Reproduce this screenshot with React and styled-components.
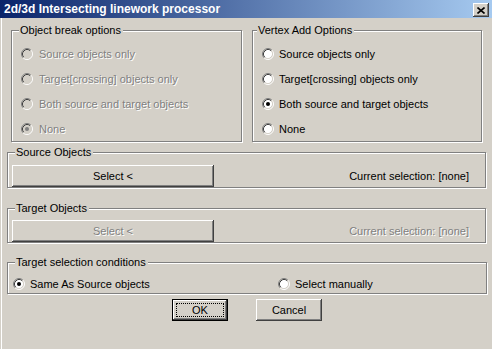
import styled, { createGlobalStyle } from "styled-components";

const GlobalStyle = createGlobalStyle`
  html, body {
    margin: 0;
    padding: 0;
    background: #d4d0c8;
  }
  body {
    font-family: "Liberation Sans", Arial, sans-serif;
    font-size: 11px;
    color: #000;
  }
`;

const Window = styled.div`
  width: 492px;
  height: 349px;
  background: #d4d0c8;
  box-shadow: inset 1px 0 #d4d0c8, inset 2px 0 #fff;
  display: flex;
  flex-direction: column;
  overflow: hidden;
`;

const TitleBar = styled.div`
  height: 18px;
  display: flex;
  align-items: center;
  justify-content: space-between;
  padding: 0 3px 0 4px;
  background: linear-gradient(to right, #0a246a, #a6caf0);
  color: #fff;
  font-weight: bold;
  font-size: 12px;
`;

const CloseButton = styled.div`
  width: 16px;
  height: 14px;
  margin-top: 2px;
  background: #d4d0c8;
  box-shadow: inset -1px -1px #404040, inset 1px 1px #fff,
    inset -2px -2px #808080, inset 2px 2px #d4d0c8;
  display: flex;
  align-items: center;
  justify-content: center;
`;

const TopRow = styled.div`
  display: flex;
  gap: 10px;
  margin: 12px 0 0 11px;
`;

const Group = styled.div`
  position: relative;
  width: ${(p) => p.$width}px;
  height: ${(p) => p.$height}px;
  box-sizing: border-box;
  border: 1px solid #808080;
  box-shadow: inset 1px 1px #fff, 1px 1px #fff;
  padding: ${(p) => p.$pad || "0"};
  margin: ${(p) => p.$margin || "0"};
  display: flex;
  flex-direction: ${(p) => (p.$row ? "row" : "column")};
  align-items: ${(p) => (p.$row ? "center" : "stretch")};
`;

const Legend = styled.span`
  position: absolute;
  top: -8px;
  left: ${(p) => p.$left || 7}px;
  padding: 0 2px 0 1px;
  background: #d4d0c8;
  line-height: 14px;
`;

const RadioRow = styled.label`
  display: flex;
  align-items: center;
  gap: ${(p) => p.$gap || 6}px;
  height: ${(p) => p.$h || 25}px;
  width: ${(p) => (p.$w ? `${p.$w}px` : "auto")};
  flex: none;
  color: ${(p) => (p.$disabled ? "#808080" : "#000")};
  text-shadow: ${(p) => (p.$disabled ? "1px 1px #fff" : "none")};
  white-space: nowrap;
`;

const Button = styled.div`
  width: ${(p) => p.$width}px;
  height: 22px;
  box-sizing: border-box;
  flex: none;
  background: #d4d0c8;
  display: flex;
  align-items: center;
  justify-content: center;
  position: relative;
  color: ${(p) => (p.$disabled ? "#808080" : "#000")};
  text-shadow: ${(p) => (p.$disabled ? "1px 1px #fff" : "none")};
  border: ${(p) => (p.$default ? "1px solid #000" : "none")};
  box-shadow: inset -1px -1px #404040, inset 1px 1px #fff,
    inset -2px -2px #808080, inset 2px 2px #d4d0c8;
`;

const FocusRing = styled.span`
  position: absolute;
  inset: 3px;
  border: 1px dotted #000;
`;

const Selection = styled.span`
  margin-left: auto;
  color: ${(p) => (p.$disabled ? "#808080" : "#000")};
  text-shadow: ${(p) => (p.$disabled ? "1px 1px #fff" : "none")};
`;

const ButtonRow = styled.div`
  display: flex;
  justify-content: center;
  gap: 28px;
  margin: 5px 0 0 2px;
`;

function RadioGlyph({ checked, disabled }) {
  const fill = disabled ? "#d4d0c8" : "#fff";
  const dot = disabled ? "#808080" : "#000";
  return (
    <svg width="12" height="12" viewBox="0 0 12 12" style={{ flex: "none" }}>
      <circle cx="6" cy="6" r="4.5" fill={fill} />
      <path d="M2.11 9.89 A5.5 5.5 0 0 1 9.89 2.11" fill="none" stroke="#808080" />
      <path d="M9.89 2.11 A5.5 5.5 0 0 1 2.11 9.89" fill="none" stroke="#fff" />
      <path d="M2.82 9.18 A4.5 4.5 0 0 1 9.18 2.82" fill="none" stroke="#404040" />
      <path d="M9.18 2.82 A4.5 4.5 0 0 1 2.82 9.18" fill="none" stroke="#d4d0c8" />
      {checked && <circle cx="6" cy="6" r="2" fill={dot} />}
    </svg>
  );
}

function Radio({ label, checked, disabled, ...rest }) {
  return (
    <RadioRow $disabled={disabled} {...rest}>
      <RadioGlyph checked={checked} disabled={disabled} />
      <span>{label}</span>
    </RadioRow>
  );
}

const breakOptions = [
  "Source objects only",
  "Target[crossing] objects only",
  "Both source and target objects",
  "None",
];

export default function App() {
  return (
    <Window>
      <GlobalStyle />
      <TitleBar>
        <span>2d/3d Intersecting linework processor</span>
        <CloseButton>
          <svg width="8" height="7" viewBox="0 0 8 7">
            <path d="M0.5 0.5 L7.5 6.5 M7.5 0.5 L0.5 6.5" stroke="#000" strokeWidth="1.6" />
          </svg>
        </CloseButton>
      </TitleBar>

      <TopRow>
        <Group $width={231} $height={112} $pad="10px 0 0 9px">
          <Legend>Object break options</Legend>
          {breakOptions.map((o) => (
            <Radio key={o} label={o} disabled checked={o === "None"} />
          ))}
        </Group>
        <Group $width={230} $height={112} $pad="10px 0 0 9px">
          <Legend $left={4}>Vertex Add Options</Legend>
          {breakOptions.map((o) => (
            <Radio key={o} label={o} $gap={5} checked={o === "Both source and target objects"} />
          ))}
        </Group>
      </TopRow>

      <Group $row $width={479} $height={36} $pad="12px 16px 0 4px" $margin="10px 0 0 7px">
        <Legend>Source Objects</Legend>
        <Button $width={202}>Select &lt;</Button>
        <Selection>Current selection: [none]</Selection>
      </Group>

      <Group $row $width={479} $height={35} $pad="11px 16px 0 4px" $margin="20px 0 0 7px">
        <Legend>Target Objects</Legend>
        <Button $width={202} $disabled>Select &lt;</Button>
        <Selection $disabled>Current selection: [none]</Selection>
      </Group>

      <Group $row $width={480} $height={32} $pad="11px 0 0 5px" $margin="19px 0 0 7px">
        <Legend>Target selection conditions</Legend>
        <Radio label="Same As Source objects" checked $gap={5} $h={19} $w={265} />
        <Radio label="Select manually" $gap={5} $h={19} />
      </Group>

      <ButtonRow>
        <Button $width={56} $default>
          <FocusRing />
          OK
        </Button>
        <Button $width={66}>Cancel</Button>
      </ButtonRow>
    </Window>
  );
}
